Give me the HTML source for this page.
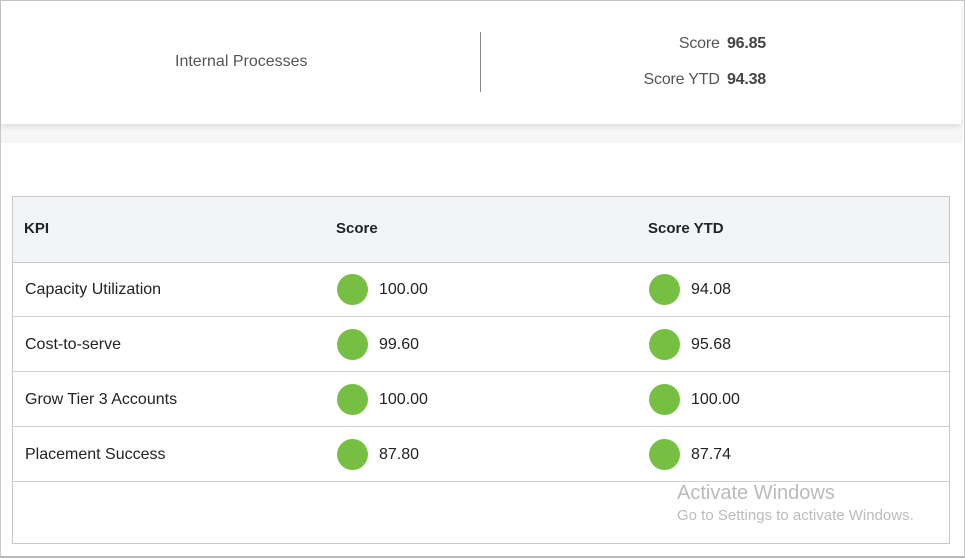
<!DOCTYPE html>
<html><head><style>
body{margin:0;width:965px;height:558px;background:#fff;font-family:"Liberation Sans",sans-serif;position:relative;overflow:hidden}
.frame{position:absolute;left:0;top:0;width:963px;height:555px;border:1px solid #c8c8c8;border-bottom:2px solid #b8b8b8}
.band{position:absolute;left:1px;top:120px;width:962px;height:23px;background:#f6f6f6}
.card{position:absolute;left:1px;top:1px;width:960px;height:123px;background:#fff;box-shadow:0 2px 6px rgba(0,0,0,.12)}
.t{position:absolute;white-space:nowrap}
.div{position:absolute;left:480px;top:32px;width:1px;height:60px;background:#888}
.tbl{position:absolute;left:12px;top:196px;width:936px;height:346px;border:1px solid #c8c8c8}
.hdr{position:absolute;left:0;top:0;width:936px;height:65px;background:#f2f5f8;border-bottom:1px solid #c8c8c8}
.row{position:absolute;left:0;width:936px;height:54px;border-bottom:1px solid #cfcfcf}
.c{position:absolute;width:31px;height:31px;border-radius:50%;background:#76bf43;top:12px}
.h{font-weight:bold;font-size:15px;color:#222;top:23px}
.v{font-size:16px;color:#222;top:19px}
.sc{position:absolute;right:195px;font-size:16px;color:#555;white-space:nowrap;letter-spacing:-0.2px}
</style></head><body>
<div class="frame"></div>
<div class="band"></div>
<div class="card">
<div class="t" style="left:174px;top:52px;font-size:16px;color:#555">Internal Processes</div>
<div class="div" style="left:479px;top:31px"></div>
<div class="sc" style="top:34px">Score <b style="color:#444;margin-left:3px">96.85</b></div>
<div class="sc" style="top:70px">Score YTD <b style="color:#444;margin-left:3px">94.38</b></div>
</div>
<div class="tbl">
<div class="hdr">
<div class="t h" style="left:11px">KPI</div>
<div class="t h" style="left:323px">Score</div>
<div class="t h" style="left:635px">Score YTD</div>
</div>
<div class="row" style="top:65px"><div class="t v" style="left:12px">Capacity Utilization</div><div class="c" style="left:324px"></div><div class="t v" style="left:366px">100.00</div><div class="c" style="left:636px"></div><div class="t v" style="left:678px">94.08</div></div>
<div class="row" style="top:120px"><div class="t v" style="left:12px">Cost-to-serve</div><div class="c" style="left:324px"></div><div class="t v" style="left:366px">99.60</div><div class="c" style="left:636px"></div><div class="t v" style="left:678px">95.68</div></div>
<div class="row" style="top:175px"><div class="t v" style="left:12px">Grow Tier 3 Accounts</div><div class="c" style="left:324px"></div><div class="t v" style="left:366px">100.00</div><div class="c" style="left:636px"></div><div class="t v" style="left:678px">100.00</div></div>
<div class="row" style="top:230px"><div class="t v" style="left:12px">Placement Success</div><div class="c" style="left:324px"></div><div class="t v" style="left:366px">87.80</div><div class="c" style="left:636px"></div><div class="t v" style="left:678px">87.74</div></div>
</div>
<div class="t" style="left:677px;top:482px;font-size:20px;color:#bbb">Activate Windows</div>
<div class="t" style="left:677px;top:507px;font-size:15px;color:#bbb">Go to Settings to activate Windows.</div>
</body></html>
